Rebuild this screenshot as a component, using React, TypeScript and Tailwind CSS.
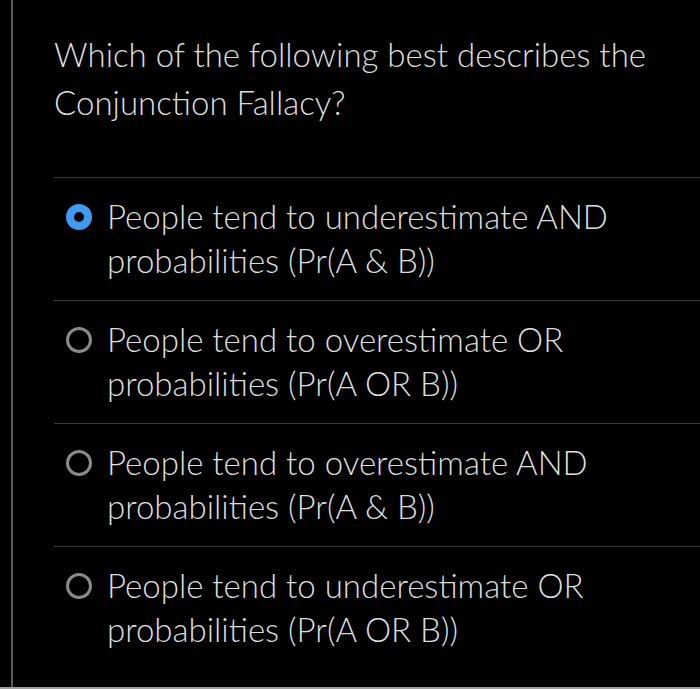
import React from "react";

const options = [
  { text: "People tend to underestimate AND probabilities (Pr(A & B))", selected: true },
  { text: "People tend to overestimate OR probabilities (Pr(A OR B))", selected: false },
  { text: "People tend to overestimate AND probabilities (Pr(A & B))", selected: false },
  { text: "People tend to underestimate OR probabilities (Pr(A OR B))", selected: false },
];

function Radio({ selected }: { selected: boolean }) {
  if (selected) {
    return <span className="block w-[26px] h-[26px] rounded-full border-[8px] border-[#3d9bf5] bg-black" />;
  }
  return <span className="block w-[26px] h-[26px] rounded-full border-[3px] border-[#8a8a8a]" />;
}

export default function App() {
  return (
    <div
      className="w-[700px] h-[689px] bg-black border-b-2 border-[#a0a0a0] overflow-hidden"
      style={{ fontFamily: "Lato, 'Open Sans', sans-serif" }}
    >
      <div className="ml-[11px] h-full border-l-2 border-[#5a5a5a] pl-[41px] pt-[30px] text-[#dedede]">
        <h1 className="text-[33px] leading-[48px] font-light pr-[30px]">
          Which of the following best describes the Conjunction Fallacy?
        </h1>

        <div className="mt-[51px]">
          {options.map((o, i) => (
            <div key={i} className="border-t border-[#3a3a3a] flex items-start pt-[16px] h-[123px]">
              <div className="w-[53px] pl-[12px] pt-[10px]">
                <Radio selected={o.selected} />
              </div>
              <p className="text-[33px] leading-[44px] font-light w-[540px]">{o.text}</p>
            </div>
          ))}
        </div>
      </div>
    </div>
  );
}
